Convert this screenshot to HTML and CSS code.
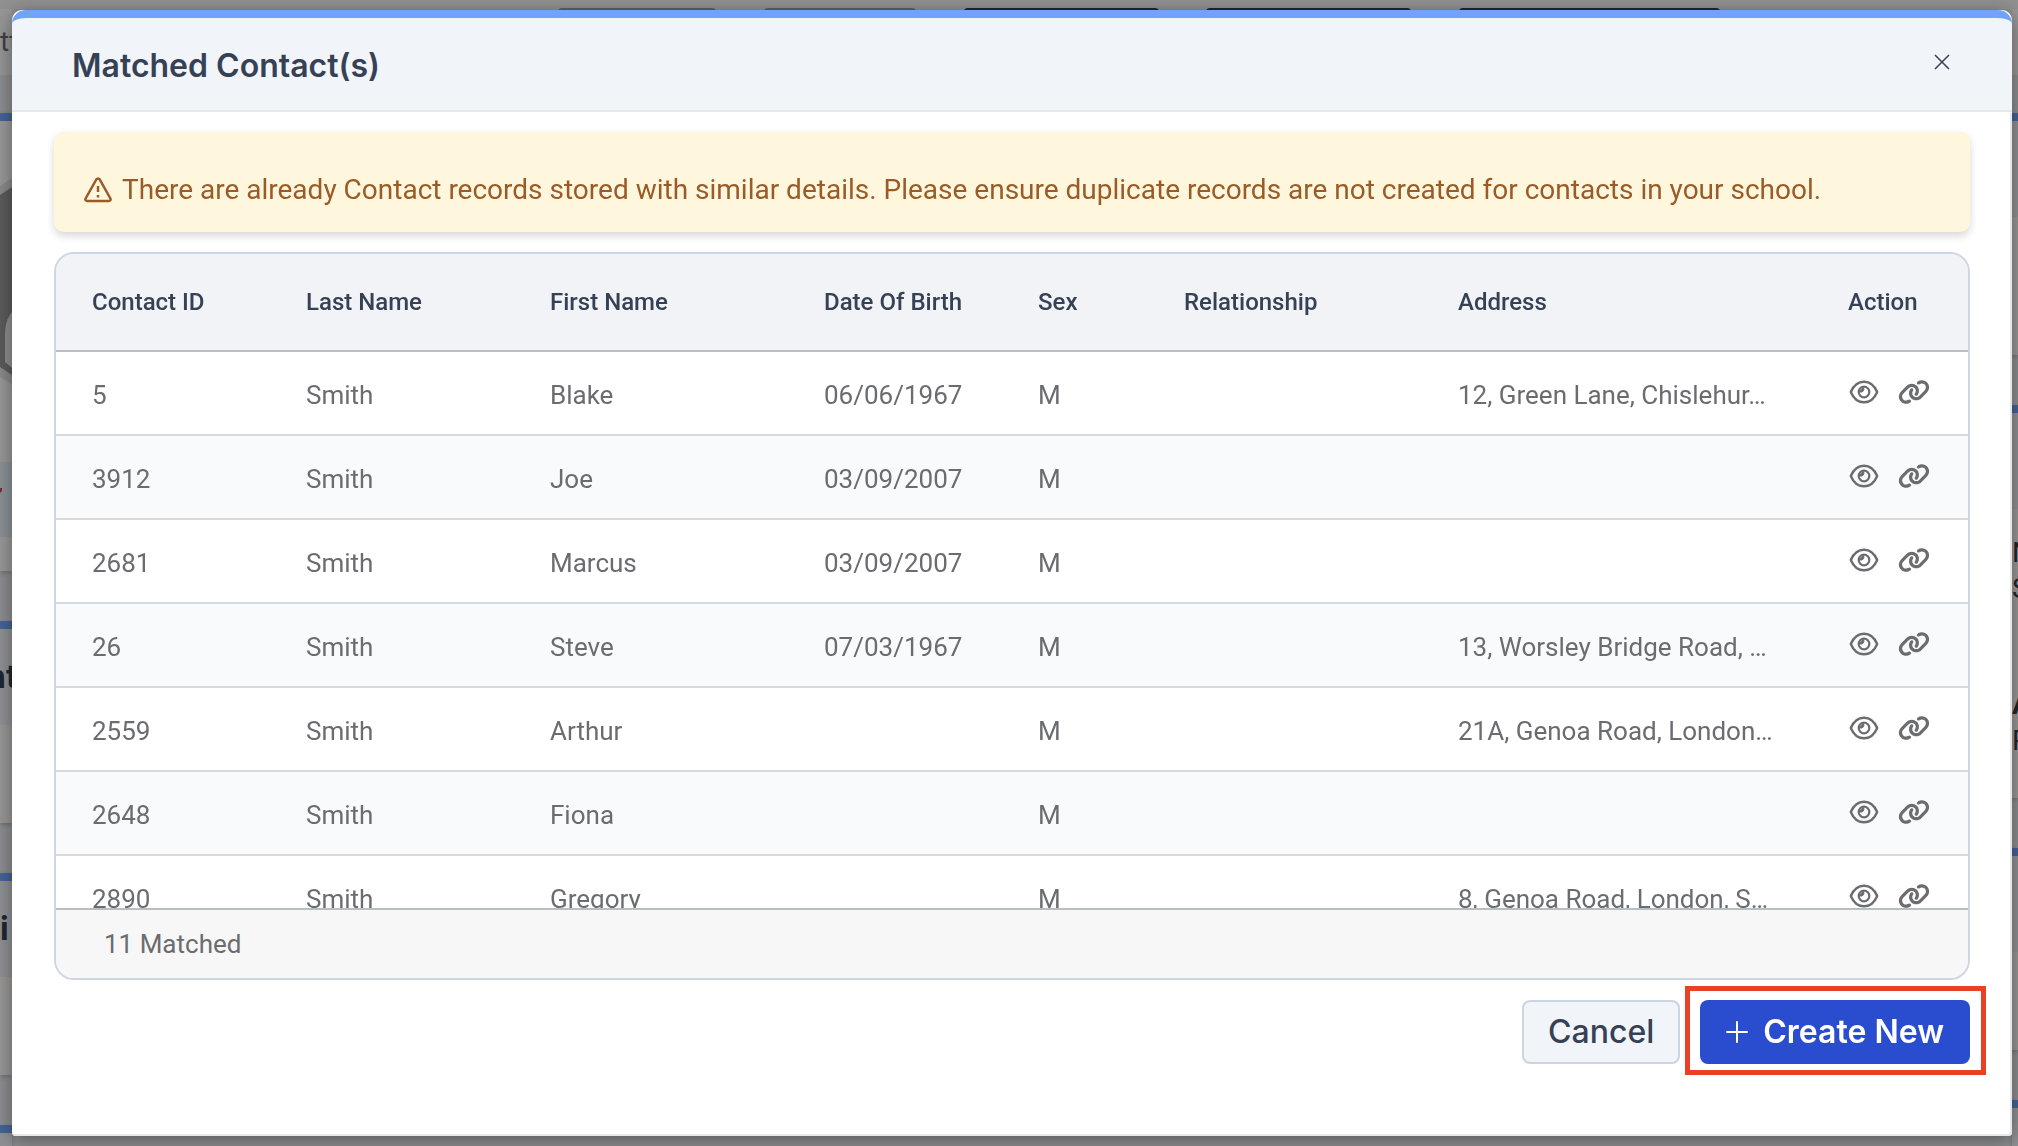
FILE: index.html
```
<!DOCTYPE html>
<html lang="en">
  <head>
    <meta charset="UTF-8" />
    <meta name="viewport" content="width=device-width, initial-scale=1.0" />
    <title>Matched Contact(s)</title>
    <link rel="stylesheet" href="styles.css" />
  </head>
  <body>
    <!-- Icons shared by the table rows -->
    <svg class="sprite" aria-hidden="true">
      <symbol id="icon-eye" viewBox="0 0 32 32">
        <path d="M2.8 16C5.5 9.500 10.300 5.700 16 5.700S26.500 9.500 29.200 16C26.500 22.500 21.700 26.300 16 26.300S5.500 22.500 2.800 16z" fill="none" stroke="currentColor" stroke-width="2.400" stroke-linejoin="round" />
        <circle cx="16" cy="16" r="5.300" fill="none" stroke="currentColor" stroke-width="2.200" />
        <path d="M15.500 11.500a3 3 0 0 1-4 4.200z" fill="currentColor" stroke="currentColor" stroke-width="1" />
      </symbol>
      <symbol id="icon-link" viewBox="0 0 640 512">
        <path fill="currentColor" d="M579.8 267.7c56.5-56.5 56.5-148 0-204.5c-50-50-128.8-56.5-186.3-15.4l-1.6 1.1c-14.4 10.3-17.7 30.3-7.4 44.6s30.3 17.7 44.6 7.4l1.6-1.1c32.1-22.9 76-19.3 103.8 8.6c31.5 31.5 31.5 82.5 0 114L422.3 334.8c-31.5 31.5-82.5 31.5-114 0c-27.9-27.9-31.5-71.8-8.6-103.8l1.1-1.6c10.3-14.4 6.9-34.4-7.4-44.6s-34.4-6.9-44.6 7.4l-1.1 1.6C206.5 251.2 213 330 263 380c56.5 56.5 148 56.5 204.5 0L579.8 267.7zM60.2 244.3c-56.5 56.5-56.5 148 0 204.5c50 50 128.8 56.5 186.3 15.4l1.6-1.1c14.4-10.3 17.7-30.3 7.4-44.6s-30.3-17.7-44.6-7.4l-1.6 1.1c-32.1 22.9-76 19.3-103.8-8.6C74 372 74 321 105.5 289.5L217.7 177.2c31.5-31.5 82.5-31.5 114 0c27.9 27.9 31.5 71.8 8.6 103.9l-1.1 1.6c-10.3 14.4-6.9 34.4 7.4 44.6s34.4 6.9 44.6-7.4l1.1-1.6C433.5 260.8 427 182 377 132c-56.5-56.5-148-56.5-204.5 0L60.2 244.3z" />
      </symbol>
    </svg>

    <!-- Page behind the dialog -->
    <div class="page" aria-hidden="true">
      <div class="toolbar">
        <span class="tool"></span>
        <span class="tool tool-xs"></span>
        <span class="tool tool-dark"></span>
        <span class="tool tool-dark tool-md"></span>
        <span class="tool tool-dark tool-lg"></span>
      </div>
      <div class="columns">
        <div class="column">
          <div class="crumb">tt</div>
          <div class="card card-photo">
            <svg class="photo" viewBox="0 0 12 341">
              <path fill="#8a8a8a" d="M12 57L0 65V256L12 264z" />
              <path fill="#5c5c5c" d="M12 66L0 74V246L12 254z" />
              <path fill="#8f8f8f" d="M12 191C7 197 5 204 5 215V241L12 247z" />
            </svg>
            <svg class="strip" viewBox="0 0 12 75">
              <path fill="#7a2f35" d="M0 26l2 0v3l-2 2z" />
            </svg>
          </div>
          <div class="card card-sm"><h2>nt</h2></div>
          <div class="card card-sm"><h2 class="indent">i</h2></div>
          <div class="card card-sm"></div>
        </div>
        <div class="column column-right">
          <div class="crumb"></div>
          <div class="card card-md"></div>
          <div class="card card-list">
            <p>N<br />S</p>
            <p><b>A</b><br />P</p>
          </div>
          <div class="card card-sm"></div>
          <div class="card card-sm"></div>
        </div>
      </div>
    </div>

    <div class="modal" role="dialog" aria-labelledby="modal-title">
      <div class="modal-header">
        <h1 id="modal-title">Matched Contact(s)</h1>
        <button type="button" class="close-btn" aria-label="Close">
          <svg viewBox="0 0 16 16"><path d="M1 1l14 14M15 1L1 15" /></svg>
        </button>
      </div>

      <div class="modal-body">
        <div class="warning">
          <svg viewBox="0 0 28 28">
            <path d="M12.300 3.500L1.600 22.500C1 23.700 1.700 25 3.100 25H24.900C26.300 25 27 23.700 26.400 22.500L15.700 3.500C14.900 2.200 13.100 2.200 12.300 3.500z" />
            <path d="M14 10v6M14 19v2.500" />
          </svg>
          <span>There are already Contact records stored with similar details. Please ensure duplicate records are not created for contacts in your school.</span>
        </div>

        <div class="table-box">
          <div class="table-scroll">
            <table>
              <colgroup>
                <col class="col-id" />
                <col class="col-last" />
                <col class="col-first" />
                <col class="col-dob" />
                <col class="col-sex" />
                <col class="col-rel" />
                <col />
                <col class="col-action" />
              </colgroup>
              <thead>
                <tr>
                  <th>Contact ID</th>
                  <th>Last Name</th>
                  <th>First Name</th>
                  <th>Date Of Birth</th>
                  <th>Sex</th>
                  <th>Relationship</th>
                  <th>Address</th>
                  <th>Action</th>
                </tr>
              </thead>
              <tbody id="contacts"></tbody>
            </table>
          </div>
          <div class="table-footer">11 Matched</div>
        </div>

        <div class="actions">
          <button type="button" class="btn btn-cancel">Cancel</button>
          <div class="highlight">
            <button type="button" class="btn btn-create">
              <svg viewBox="0 0 22 22"><path d="M11 1v20M1 11h20" /></svg>
              Create New
            </button>
          </div>
        </div>
      </div>
    </div>

    <script src="script.js"></script>
  </body>
</html>
```
FILE: styles.css
```
* {
  box-sizing: border-box;
}

body {
  margin: 0;
  font-family: Roboto, 'Liberation Sans', sans-serif;
  background: #8d8e91;
  color: #6b6c6f;
}

button {
  font-family: inherit;
  cursor: pointer;
}

.sprite {
  display: none;
}

/* Dimmed page */
.page {
  height: 100vh;
  overflow: hidden;
}

.toolbar {
  display: flex;
  height: 9px;
  padding: 8px 298px 0 558px;
  justify-content: space-between;
  background: #919191;
}

.tool {
  width: 158px;
  height: 4px;
  border-radius: 4px 4px 0 0;
  background: #5f6062;
}

.tool-xs {
  width: 152px;
}

.tool-dark {
  width: 195px;
  background: #1e2633;
}

.tool-md {
  width: 205px;
}

.tool-lg {
  width: 261px;
}

.columns {
  display: flex;
  justify-content: space-between;
}

.column {
  width: 12px;
  white-space: nowrap;
}

.column-right {
  width: 6px;
}

.crumb {
  height: 66px;
  margin-bottom: 38px;
  padding-top: 17px;
  background: #979797;
  color: #3f4144;
  font-size: 28px;
  line-height: 32px;
}

.card {
  margin-bottom: 50px;
  border-top: 8px solid #456498;
  background: linear-gradient(#8f9194 96px, #999896 96px);
  box-shadow: 0 2px 4px rgba(0, 0, 0, 0.2);
}

.card-photo {
  height: 458px;
  background: #999999;
}

.photo,
.strip {
  display: block;
  width: 12px;
  height: 341px;
}

.strip {
  height: 75px;
  background: #8b9296;
}

.card-sm {
  height: 202px;
}

.card-md {
  height: 242px;
}

.card-list {
  height: 393px;
  padding-top: 122px;
}

.card h2 {
  margin: 0 0 0 -14px;
  padding-top: 28px;
  color: #1f2733;
  font: 700 32px/40px Inter, sans-serif;
}

.card .indent {
  margin-left: 0;
}

.card p {
  margin: 0 0 80px;
  color: #252525;
  font-size: 28px;
  line-height: 36px;
}

/* Dialog */
.modal {
  position: fixed;
  inset: 10px 6px 10px 12px;
  display: flex;
  flex-direction: column;
  background: #ffffff;
  border-radius: 10px 10px 4px 4px;
  box-shadow: 0 4px 20px rgba(0, 0, 0, 0.4);
}

.modal-header {
  display: flex;
  align-items: center;
  justify-content: space-between;
  height: 102px;
  padding: 4px 60px 0;
  background: #f1f5fa;
  border-top: 8px solid #72a3f8;
  border-bottom: 2px solid #e5e7eb;
  border-radius: 14px 14px 0 0;
}

.modal-header h1 {
  margin: 0;
  color: #374155;
  font: 600 32px/40px Inter, sans-serif;
}

.close-btn {
  display: flex;
  margin-bottom: 8px;
  padding: 2px;
  border: none;
  background: none;
}

.close-btn svg {
  width: 16px;
  height: 16px;
  fill: none;
  stroke: #374155;
  stroke-width: 1.5;
}

.modal-body {
  flex: 1;
  display: flex;
  flex-direction: column;
  gap: 20px;
  min-height: 0;
  padding: 20px 40px 70px 42px;
  border-right: 2px solid #e5e7eb;
  border-bottom: 2px solid #e5e7eb;
  border-radius: 4px;
}

.warning {
  display: flex;
  align-items: center;
  gap: 10px;
  padding: 42px 30px 26px;
  background: #fef7de;
  border-radius: 10px;
  box-shadow: 0 4px 8px rgba(0, 0, 0, 0.16);
  color: #9a5b26;
  font-size: 28px;
  line-height: 32px;
}

.warning svg {
  flex: none;
  width: 28px;
  height: 28px;
  fill: none;
  stroke: #9a5b26;
  stroke-width: 2.5;
}

.table-box {
  flex: 1;
  display: flex;
  flex-direction: column;
  min-height: 0;
  border: 2px solid #cfd6e3;
  border-radius: 20px;
  overflow: hidden;
}

.table-scroll {
  flex: 1;
  min-height: 0;
  overflow-y: auto;
  scrollbar-width: none;
}

table {
  width: 100%;
  table-layout: fixed;
  border-collapse: separate;
  border-spacing: 0;
}

.col-id,
.col-dob {
  width: 214px;
}

.col-last {
  width: 244px;
}

.col-first,
.col-rel {
  width: 274px;
}

.col-sex {
  width: 146px;
}

.col-action {
  width: 156px;
}

th {
  height: 98px;
  padding: 0 0 0 36px;
  background: #f1f3f7;
  border-bottom: 2px solid #b9bec7;
  color: #374155;
  font-size: 24px;
  font-weight: 500;
  text-align: left;
}

td {
  height: 84px;
  padding: 4px 0 0 36px;
  border-bottom: 2px solid #d6d9dd;
  font-size: 26px;
  white-space: nowrap;
}

tbody tr:nth-child(even) {
  background: #f9fafc;
}

.row-actions {
  display: flex;
  gap: 18px;
  padding-bottom: 6px;
}

.icon-btn {
  display: flex;
  padding: 0;
  border: none;
  background: none;
  color: #6b6c6f;
}

.icon-btn svg {
  width: 32px;
  height: 32px;
}

.table-footer {
  height: 70px;
  padding-left: 48px;
  background: #f7f7f7;
  border-top: 2px solid #b9bec3;
  font-size: 26px;
  line-height: 68px;
}

.actions {
  display: flex;
  justify-content: flex-end;
  gap: 20px;
}

.btn {
  display: flex;
  align-items: center;
  height: 64px;
  padding: 0 26px;
  border: none;
  border-radius: 8px;
  font: 600 32px/40px Inter, sans-serif;
}

.btn-cancel {
  padding: 0 24px;
  background: #f1f5fa;
  border: 2px solid #cbd5e1;
  color: #374155;
  font-weight: 500;
}

.btn-create {
  gap: 15px;
  background: #2a4dd0;
  color: #ffffff;
}

.btn-create svg {
  width: 22px;
  height: 22px;
  fill: none;
  stroke: #ffffff;
  stroke-width: 2;
  stroke-linecap: round;
}

.highlight {
  position: relative;
}

.highlight::after {
  content: '';
  position: absolute;
  inset: -14px -16px -11px -15px;
  border: 5px solid #ea4025;
  pointer-events: none;
}
```
FILE: script.js
```
const contacts = [
  ['5', 'Smith', 'Blake', '06/06/1967', 'M', '', '12, Green Lane, Chislehur…'],
  ['3912', 'Smith', 'Joe', '03/09/2007', 'M', '', ''],
  ['2681', 'Smith', 'Marcus', '03/09/2007', 'M', '', ''],
  ['26', 'Smith', 'Steve', '07/03/1967', 'M', '', '13, Worsley Bridge Road, …'],
  ['2559', 'Smith', 'Arthur', '', 'M', '', '21A, Genoa Road, London…'],
  ['2648', 'Smith', 'Fiona', '', 'M', '', ''],
  ['2890', 'Smith', 'Gregory', '', 'M', '', '8, Genoa Road, London, S…'],
];

const actions = `
  <td>
    <div class="row-actions">
      <button type="button" class="icon-btn" aria-label="View"><svg><use href="#icon-eye" /></svg></button>
      <button type="button" class="icon-btn" aria-label="Link"><svg><use href="#icon-link" /></svg></button>
    </div>
  </td>`;

document.getElementById('contacts').innerHTML = contacts
  .map((row) => `<tr>${row.map((cell) => `<td>${cell}</td>`).join('')}${actions}</tr>`)
  .join('');
```
